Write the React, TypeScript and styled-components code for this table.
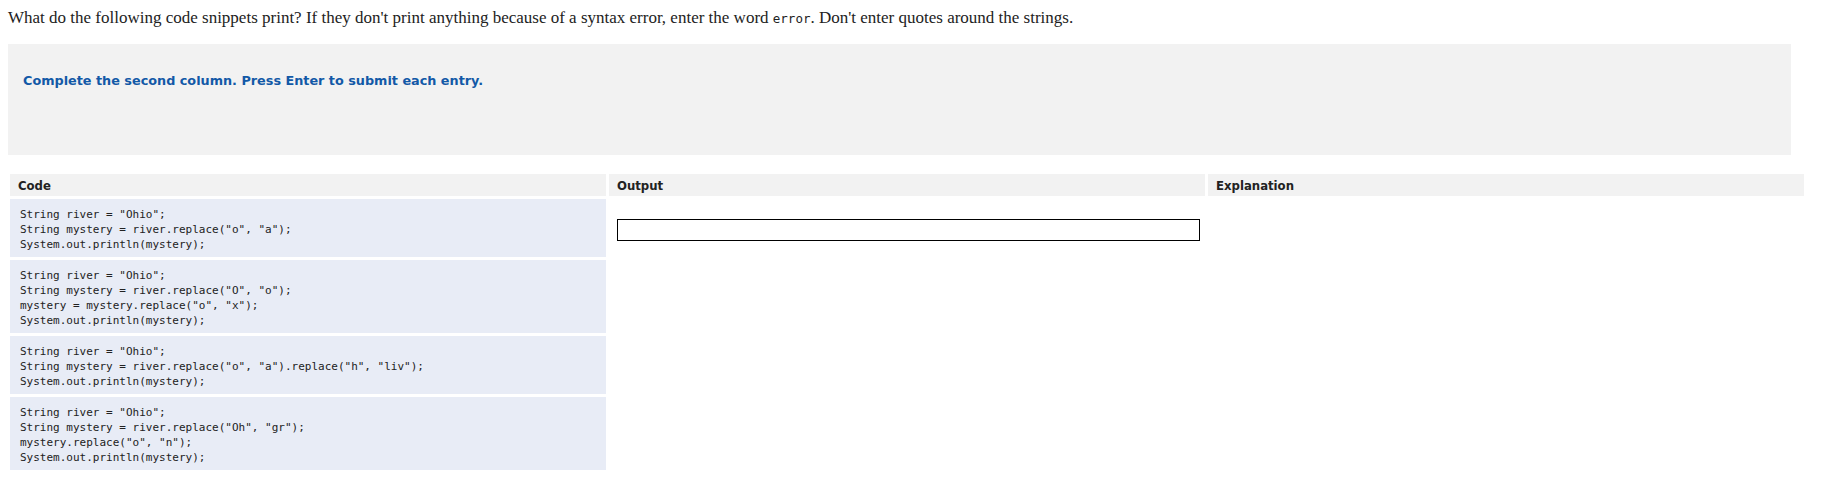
import React from "react";
import styled, { createGlobalStyle } from "styled-components";

const GlobalStyle = createGlobalStyle`
  html, body { margin: 0; padding: 0; background: #ffffff; }
  body { font-family: "Liberation Serif", serif; color: #222; }
`;

const Page = styled.div`
  padding: 8px;
`;

const Intro = styled.p`
  margin: 0;
  font-family: "Liberation Serif", serif;
  font-size: 17px;
  line-height: 19px;
  color: #222;
`;

const Kw = styled.code`
  font-family: "DejaVu Sans Mono", monospace;
  font-size: 12.5px;
`;

const Instructions = styled.div`
  box-sizing: border-box;
  width: 1783px;
  height: 111px;
  margin-top: 16px;
  padding: 29px 15px;
  background: #f2f2f2;
  font-family: "DejaVu Sans", sans-serif;
  font-weight: bold;
  font-size: 12.8px;
  line-height: 16px;
  color: #1259a7;
`;

const Table = styled.table`
  margin-top: 16px;
  margin-left: -1px;
  width: 1800px;
  table-layout: fixed;
  border-collapse: separate;
  border-spacing: 3px;
`;

const Th = styled.th`
  background: #f2f2f2;
  text-align: left;
  padding: 0 8px;
  height: 22px;
  font-family: "DejaVu Sans Condensed", "DejaVu Sans", sans-serif;
  font-weight: bold;
  font-size: 13px;
  color: #222;
`;

const CodeCell = styled.td`
  background: #e8ecf6;
  padding: 8px 10px 5px;
  vertical-align: top;
`;

const Pre = styled.pre`
  margin: 0;
  font-family: "DejaVu Sans Mono", monospace;
  font-size: 11px;
  line-height: 15px;
  color: #222;
`;

const OutputCell = styled.td`
  padding: 0 4px 0 8px;
  vertical-align: middle;
`;

const Answer = styled.input`
  box-sizing: border-box;
  display: block;
  width: 583px;
  height: 22px;
  margin-top: 3px;
  border: 1px solid #000;
  background: #fff;
  padding: 0 4px;
  font-family: "DejaVu Sans Mono", monospace;
  font-size: 12px;
  outline: none;
`;

const EmptyCell = styled.td`
  padding: 0;
`;

const snippets = [
  `String river = "Ohio";
String mystery = river.replace("o", "a");
System.out.println(mystery);`,
  `String river = "Ohio";
String mystery = river.replace("O", "o");
mystery = mystery.replace("o", "x");
System.out.println(mystery);`,
  `String river = "Ohio";
String mystery = river.replace("o", "a").replace("h", "liv");
System.out.println(mystery);`,
  `String river = "Ohio";
String mystery = river.replace("Oh", "gr");
mystery.replace("o", "n");
System.out.println(mystery);`,
];

export default function App() {
  return (
    <Page>
      <GlobalStyle />
      <Intro>
        What do the following code snippets print? If they don't print anything because of a
        syntax error, enter the word <Kw>error</Kw>. Don't enter quotes around the strings.
      </Intro>
      <Instructions>Complete the second column. Press Enter to submit each entry.</Instructions>
      <Table>
        <thead>
          <tr>
            <Th>Code</Th>
            <Th>Output</Th>
            <Th>Explanation</Th>
          </tr>
        </thead>
        <tbody>
          {snippets.map((s, i) => (
            <tr key={i}>
              <CodeCell>
                <Pre>{s}</Pre>
              </CodeCell>
              <OutputCell>{i === 0 ? <Answer type="text" /> : null}</OutputCell>
              <EmptyCell />
            </tr>
          ))}
        </tbody>
      </Table>
    </Page>
  );
}
